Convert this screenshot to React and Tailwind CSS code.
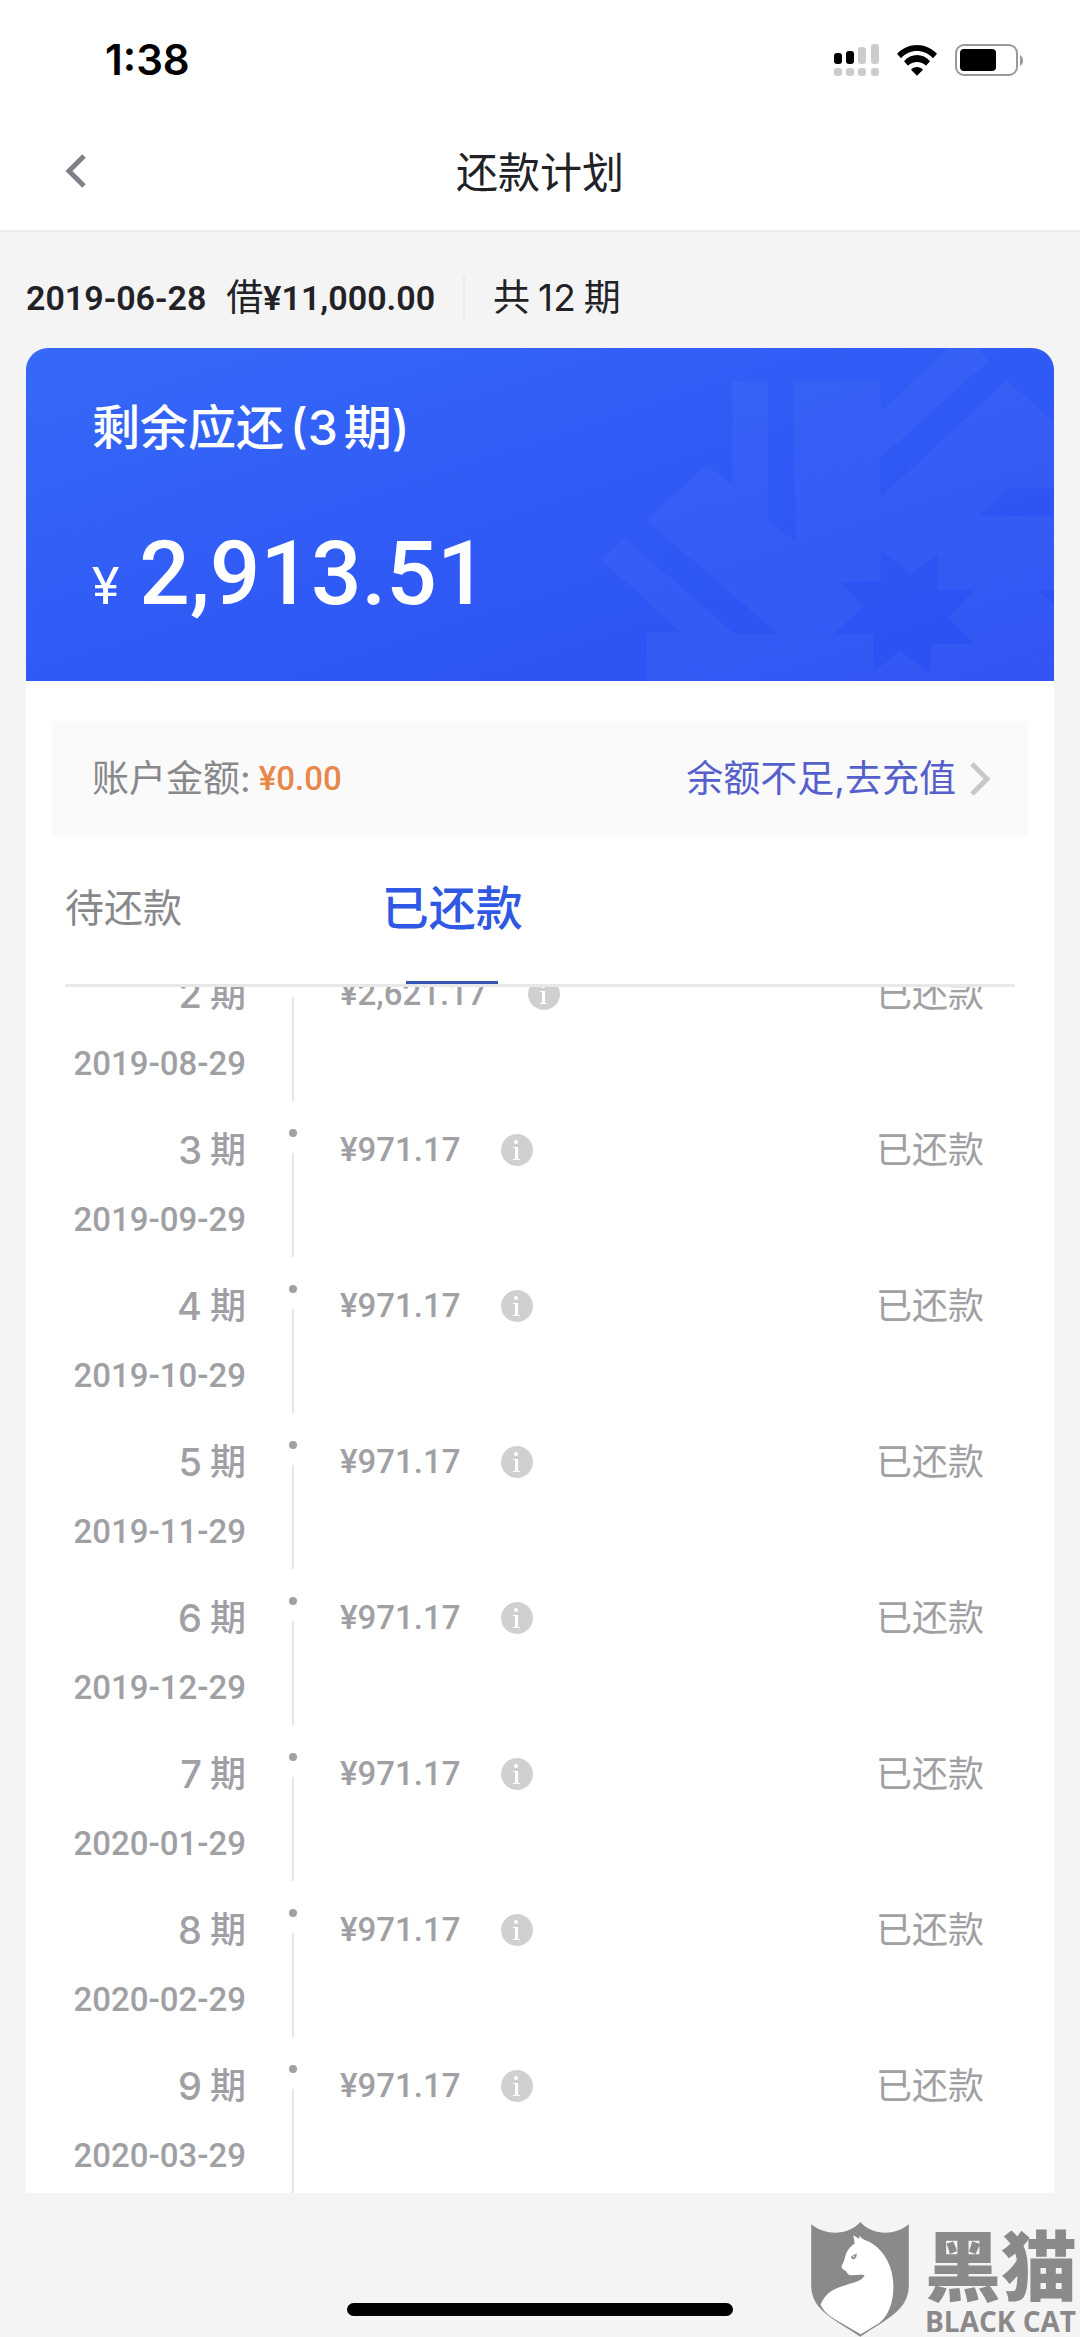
import React, { useState } from 'react';
import { clsx } from 'clsx';

const tabs = [
  { id: 'pending', label: '待还款' },
  { id: 'paid', label: '已还款' },
];

const periods = [
  { no: 2, date: '2019-08-29', amount: '¥2,621.17' },
  { no: 3, date: '2019-09-29', amount: '¥971.17' },
  { no: 4, date: '2019-10-29', amount: '¥971.17' },
  { no: 5, date: '2019-11-29', amount: '¥971.17' },
  { no: 6, date: '2019-12-29', amount: '¥971.17' },
  { no: 7, date: '2020-01-29', amount: '¥971.17' },
  { no: 8, date: '2020-02-29', amount: '¥971.17' },
  { no: 9, date: '2020-03-29', amount: '¥971.17' },
];

function StatusBar() {
  return (
    <div className="flex h-28 shrink-0 items-center justify-between pt-2 pr-14 pl-[105px]">
      <span className="text-[42px] leading-12 font-semibold text-black">1:38</span>
      <div className="flex items-center gap-[17px]">
        {/* Dual SIM signal */}
        <svg width="45" height="33" viewBox="0 0 45 33" aria-hidden="true">
          <rect x="0" y="9" width="8" height="11" rx="3" fill="#000" />
          <rect x="12" y="7" width="8" height="13" rx="3" fill="#000" />
          <rect x="24" y="3" width="8" height="17" rx="3" fill="#ccc" />
          <rect x="37" y="0" width="8" height="20" rx="3" fill="#ccc" />
          {[0, 12, 24, 37].map(x => <rect key={x} x={x} y="24" width="8" height="8" rx="3" fill="#ccc" />)}
        </svg>
        <svg width="42" height="32" viewBox="0 0 126 96" aria-hidden="true">
          <path d="M3 29C36-6 90-6 123 29L111 43C84 14 42 14 15 43Z" />
          <path d="M24 52C45 27 81 27 102 52L90 65C75 50 51 50 36 65Z" />
          <path d="M45 77C55 66 71 66 81 77L63 95Z" />
        </svg>
        <svg width="69" height="33" viewBox="0 0 69 33" aria-hidden="true">
          <rect x="1" y="1" width="61" height="30" rx="8" fill="none" stroke="#999" strokeWidth="2" />
          <rect x="5" y="5" width="36" height="22" rx="4" fill="#000" />
          <path d="M65 11c4 2 4 9 0 11z" fill="#999" />
        </svg>
      </div>
    </div>
  );
}

function CardPattern() {
  return (
    <svg className="absolute right-0 bottom-0 h-full" viewBox="0 21 1482 1000" aria-hidden="true">
      <path
        fill="#fff"
        fillOpacity="0.035"
        fillRule="evenodd"
        d="M515 120H622V540L705 602L697 120H960V210L1165 21H1250L1285 60L960 350V468L1340 118L1482 245V443H1340L1255 525H1482V748H1430L1482 790V1021H258V875H360L120 655L192 592L520 878H650L255 538L437 372L515 430Z
           M960 625V722H835L910 795L820 880H937V995L1020 930L1110 1000V910H1240L1160 830L1240 748H1133V640L1050 700Z"
      />
    </svg>
  );
}

function InfoIcon() {
  return (
    <svg width="32" height="36" viewBox="0 0 32 36" aria-hidden="true">
      <circle cx="16" cy="18" r="16" fill="#d0d0d0" />
      <circle cx="15" cy="10" r="2" fill="#fff" />
      <path d="M12 15h5v12h2v1h-7v-1h2V16h-2z" fill="#fff" />
    </svg>
  );
}

function PeriodRow({ no, date, amount }) {
  return (
    <li className="flex h-[156px] items-start text-[#a0a0a4]">
      <div className="flex w-[220px] flex-col items-end">
        <span className="flex items-center gap-2 text-[36px] leading-[66px] font-medium">
          <span className="text-[38px]">{no}</span>期
        </span>
        <time className="mt-1 font-['Roboto',sans-serif] text-[33px] leading-[66px] font-medium">{date}</time>
      </div>
      <div className="ml-[43px] flex w-2 flex-col items-center pt-3">
        <span className="size-2 rounded-full bg-[#a0a0a4]" />
        <span className="mt-4 h-[104px] w-[2px] bg-[#e6e6e8]" />
      </div>
      <span className="ml-[43px] font-['Roboto',sans-serif] text-[33px] leading-[66px] font-medium">{amount}</span>
      <button type="button" aria-label="详情" className="ml-[41px] flex h-[66px] items-center">
        <InfoIcon />
      </button>
      <span className="mr-[70px] ml-auto text-[36px] leading-[66px]">已还款</span>
    </li>
  );
}

function Watermark() {
  return (
    <div className="absolute right-0 bottom-0 flex items-end gap-4 text-[#8b8989]">
      <svg width="98" height="115" viewBox="93 96 292 344" aria-hidden="true">
        <path fill="#8b8989" d="M93 103C140 140 205 135 240 96C275 135 340 140 385 103V285C385 360 320 385 240 439C160 385 93 360 93 285Z" />
        <path fill="#fff" d="M219 136L236 146L238 137C245 148 255 150 265 154C315 180 339 235 339 290C339 335 325 375 298 397L241 432L165 388C140 372 127 358 121 343C140 298 175 292 210 280C235 274 248 266 253 255C238 252 225 256 211 255C203 254 200 248 198 243C186 238 183 232 184 227C192 215 193 205 197 192C203 176 212 168 223 160Z" />
        <path fill="#8b8989" d="M212 199L229 190C230 203 223 209 215 207Z" />
        <path fill="#fff" d="M218 199l4-3v9z" />
      </svg>
      <div className="flex w-[155px] flex-col items-start">
        <span className="text-[76px] leading-[76px] font-black">黑猫</span>
        <span className="font-['Open_Sans',sans-serif] text-[28px] leading-8 font-bold whitespace-nowrap">BLACK CAT</span>
      </div>
    </div>
  );
}

export default function App() {
  const [active, setActive] = useState('paid');

  return (
    <div className="relative flex h-screen flex-col overflow-hidden bg-[#f4f4f4] font-['Inter','Noto_Sans_CJK_SC',sans-serif] text-[#212126]">
      <header className="shrink-0 border-b-2 border-[#ebebeb] bg-white">
        <StatusBar />
        <div className="grid h-[118px] grid-cols-3 items-center px-16">
          <button type="button" aria-label="返回" className="justify-self-start">
            <svg width="24" height="34" viewBox="0 0 24 34" fill="none" stroke="#808088" strokeWidth="5" aria-hidden="true">
              <path d="M20 2L5 17L20 32" />
            </svg>
          </button>
          <h1 className="pt-1 text-center text-[42px] leading-12">还款计划</h1>
        </div>
      </header>

      <div className="flex h-[116px] shrink-0 items-center px-[26px] pt-4 text-[37px] leading-12">
        <span className="font-['Roboto',sans-serif] text-[34px] font-semibold">2019-06-28</span>
        <span className="ml-5">借</span>
        <span className="font-['Roboto',sans-serif] text-[34px] font-semibold">¥11,000.00</span>
        <span className="mx-7 h-11 w-[2px] bg-[#ebebed]" />
        <span className="flex gap-2"><span>共</span><span>12</span><span>期</span></span>
      </div>

      <main className="mx-[26px] flex min-h-0 flex-1 flex-col">
        {/* Remaining balance */}
        <section className="relative shrink-0 overflow-hidden rounded-t-[22px] bg-linear-to-br from-[#3669f8] via-[#305af5] to-[#2c4ff3] pt-14 pb-[59px] pl-[66px] text-white">
          <CardPattern />
          <h2 className="relative flex gap-[6px] text-[48px] leading-12 font-medium">
            <span>剩余应还</span>
            <span>(3</span>
            <span>期)</span>
          </h2>
          <p className="relative mt-[66px] flex h-[104px] items-baseline gap-5 font-['Roboto',sans-serif] leading-[112px]">
            <span className="text-[52px] leading-none">¥</span>
            <span className="text-[89px] font-medium">2,913.51</span>
          </p>
        </section>

        <div className="flex min-h-0 flex-1 flex-col bg-white">
          {/* Account balance */}
          <section className="mx-[26px] mt-10 flex h-[116px] shrink-0 items-center justify-between bg-[#fafafa] pr-9 pl-10 text-[37px]">
            <p className="flex items-center gap-2 text-[#88888c]">
              <span>账户金额:</span>
              <span className="font-['Roboto',sans-serif] text-[33px] font-medium text-[#e8874a]">¥0.00</span>
            </p>
            <a href="#recharge" className="flex items-center gap-3 text-[#5560cc]">
              余额不足,去充值
              <svg width="24" height="34" viewBox="0 0 24 34" fill="none" stroke="#c8c8c8" strokeWidth="5" aria-hidden="true">
                <path d="M4 2L19 17L4 32" />
              </svg>
            </a>
          </section>

          <div role="tablist" className="mx-[39px] grid h-[150px] shrink-0 grid-cols-3 border-b-3 border-[#e8e8e8]">
            {tabs.map(tab => (
              <button
                key={tab.id}
                type="button"
                role="tab"
                aria-selected={active === tab.id}
                onClick={() => setActive(tab.id)}
                className={clsx(
                  'relative w-fit pb-1',
                  active === tab.id ? 'text-[47px] font-medium text-[#2f58e4]' : 'text-[39px] text-[#88888c]'
                )}
              >
                {tab.label}
                {active === tab.id && <span className="absolute bottom-0 left-1/2 h-[3px] w-[92px] -translate-x-1/2 bg-[#3554b4]" />}
              </button>
            ))}
          </div>

          <div className="min-h-0 flex-1 overflow-hidden">
            <ul className="-mt-[26px]">
              {periods.map(p => <PeriodRow key={p.no} {...p} />)}
            </ul>
          </div>
        </div>
      </main>

      <footer className="flex h-36 shrink-0 items-end justify-center pb-[21px]">
        <span className="h-[13px] w-[386px] rounded-full bg-black" />
      </footer>
      <Watermark />
    </div>
  );
}
